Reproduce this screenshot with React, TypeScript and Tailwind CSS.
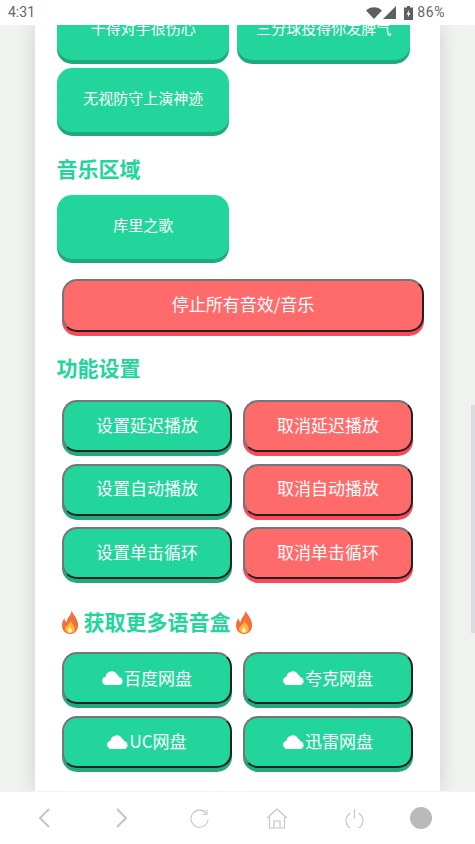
import React from "react";

function Big({ t, top }: { t: string; top?: boolean }) {
  return (
    <div className={"w-[172.500px] h-[64px] pl-[1px] rounded-[15px] bg-[#22d69b] shadow-[0_4px_0_#1fa97f] flex items-center justify-center text-white text-[15px] mb-[8px] " + (top ? "pt-[1px]" : "pb-[3px]")}>
      {t}
    </div>
  );
}
function Cloud() {
  return (
    <svg viewBox="0 0 22 15" className="w-[22px] h-[15px] shrink-0" fill="#fff">
      <path d="M4.500 15a4.200 4.200 0 0 1-1-8.300A6.200 6.200 0 0 1 15 4.500a3.500 3.500 0 0 1 2 2.800A3.900 3.900 0 0 1 17.500 15z" />
    </svg>
  );
}
function Btn({ t, red, cloud }: { t: string; red?: boolean; cloud?: boolean }) {
  return (
    <div
      className={
        "w-[170px] h-[52px] pl-[1px] rounded-[15px] border-2 border-t-[#767676] border-l-[#767676] border-r-[#222222] border-b-[#222222] flex items-center justify-center text-white text-[17px] " +
        (cloud ? "pb-[1px] " : "pb-[3px] ") +
        (red ? "bg-[#ff6b6b] shadow-[0_4px_0_#ff4757]" : "bg-[#22d69b] shadow-[0_4px_0_#1fa97f]")
      }
    >
      {cloud && <Cloud />}
      <span>{t}</span>
    </div>
  );
}
function Flame() {
  return (
    <svg viewBox="0 0 20 31" className="w-[16px] h-[25px] shrink-0">
      <path d="M12 0c0 6 7 10 8 18 1 8-4 13-10 13S0 27 0 20c0-4 2-7 3-9 0 2 1 4 3 5 0-6 7-9 6-16z" fill="#f2703a" />
      <path d="M11 14c0 4 5 6 5 11 0 4-3 5-6 5s-6-2-6-5c0-4 6-6 7-11z" fill="#fbb73a" />
      <path d="M10 22c.8 2 2.500 3 2.500 4.500S11.500 30 10 30s-2.500-1.500-2.500-3.500 1.800-2.500 2.500-4.500z" fill="#fff3c4" />
    </svg>
  );
}
function H({ children, cls }: { children: React.ReactNode; cls?: string }) {
  return <div className={"text-[21px] font-bold text-[#22d69b] leading-[28px] " + (cls ?? "")}>{children}</div>;
}

export default function App() {
  return (
    <div className="w-[475px] h-[844px] flex flex-col bg-white overflow-hidden" style={{ fontFamily: '"Noto Sans CJK SC", "Noto Sans", sans-serif' }}>
      <div className="h-[25px] shrink-0 bg-white flex items-center justify-between pl-[8px] pr-[30px] text-[#666666] text-[14px]" style={{ fontFamily: "Roboto, sans-serif" }}>
        <span>4:31</span>
        <div className="flex items-center gap-[1px]">
          <svg viewBox="0 0 16 12" className="w-[16px] h-[12px]"><path d="M0 3.500C4 -1 12 -1 16 3.500L8 12z" fill="#5f5f5f" /></svg>
          <svg viewBox="0 0 13 13" className="w-[13px] h-[13px]"><path d="M13 0v13H0z" fill="#5f5f5f" /></svg>
          <svg viewBox="0 0 9 14" className="w-[9px] h-[14px] ml-[7px] mr-[3px]"><path d="M3 0h3v1.500h3V14H0V1.500h3z" fill="#5f5f5f" /><path d="M5 4L2.500 8.500H4.200L3.800 11.500 6.500 7H4.800z" fill="#fff" /></svg>
          <span className="tracking-[0.6px]">86%</span>
        </div>
      </div>
      <div className="relative flex-1 min-h-0 bg-[#f0f2f0] overflow-hidden">
        <div className="absolute right-0 top-[380px] w-[4px] h-[228px] bg-[#dcdbe0]" />
        <div className="ml-[35px] w-[405px] h-full bg-white shadow-[0_0_18px_rgba(0,0,0,0.14)] pl-[21.500px] overflow-hidden">
          <div className="-mt-[29px] flex flex-wrap gap-x-[8px] w-[362px]">
            <Big t="干得对手很伤心" top />
            <Big t="三分球投得你发脾气" top />
            <Big t="无视防守上演神迹" />
          </div>
          <H cls="mt-[14px]">音乐区域</H>
          <div className="mt-[13px]"><Big t="库里之歌" /></div>
          <div className="ml-[5px] mt-[20px] w-[362px] h-[53px] pb-[3px] pl-[1px] rounded-[15px] border-2 border-t-[#767676] border-l-[#767676] border-r-[#222222] border-b-[#222222] bg-[#ff6b6b] shadow-[0_4px_0_#ff4757] flex items-center justify-center text-white text-[17px]">
            停止所有音效/音乐
          </div>
          <H cls="mt-[21px]">功能设置</H>
          <div className="ml-[5px] mt-[19px] grid grid-cols-[170px_170px] gap-x-[11px] gap-y-[11.500px]">
            <Btn t="设置延迟播放" /><Btn t="取消延迟播放" red />
            <Btn t="设置自动播放" /><Btn t="取消自动播放" red />
            <Btn t="设置单击循环" /><Btn t="取消单击循环" red />
          </div>
          <H cls="mt-[28px] ml-[5px] flex items-center"><Flame /><span className="ml-[6px] mr-[5px]">获取更多语音盒</span><Flame /></H>
          <div className="ml-[5px] mt-[17px] grid grid-cols-[170px_170px] gap-x-[11px] gap-y-[11.500px]">
            <Btn t="百度网盘" cloud /><Btn t="夸克网盘" cloud />
            <Btn t="UC网盘" cloud /><Btn t="迅雷网盘" cloud />
          </div>
        </div>
      </div>
      <div className="h-[53px] shrink-0 bg-white border-t border-[#f2f2f2] flex items-center pl-[38px]">
        <svg viewBox="0 0 12 20" className="w-[12px] h-[20px]" fill="none" stroke="#c4c4c4" strokeWidth="2"><path d="M11 1L2 10l9 9" /></svg>
        <svg viewBox="0 0 12 20" className="w-[12px] h-[20px] ml-[66px]" fill="none" stroke="#c4c4c4" strokeWidth="2"><path d="M1 1l9 9-9 9" /></svg>
        <svg viewBox="0 0 20 20" className="w-[19px] h-[19px] ml-[62px]" fill="none" stroke="#c4c4c4" strokeWidth="1.100"><path d="M17 4.500A9 9 0 1 0 19 11" /><path d="M18 .5v5h-5" /></svg>
        <svg viewBox="0 0 22 21" className="w-[22px] h-[21px] ml-[57px]" fill="none" stroke="#c4c4c4" strokeWidth="1.100"><path d="M1 10L11 1l10 9M3.500 9v11h15V9M8 20v-7h6v7" /></svg>
        <svg viewBox="0 0 20 20" className="w-[19px] h-[19px] ml-[57px]" fill="none" stroke="#c4c4c4" strokeWidth="1.100"><path d="M5.500 4.500a9 9 0 1 0 9 0M10 0v10" /></svg>
        <div className="w-[22px] h-[22px] rounded-full bg-[#bababa] ml-[46px]" />
      </div>
    </div>
  );
}
